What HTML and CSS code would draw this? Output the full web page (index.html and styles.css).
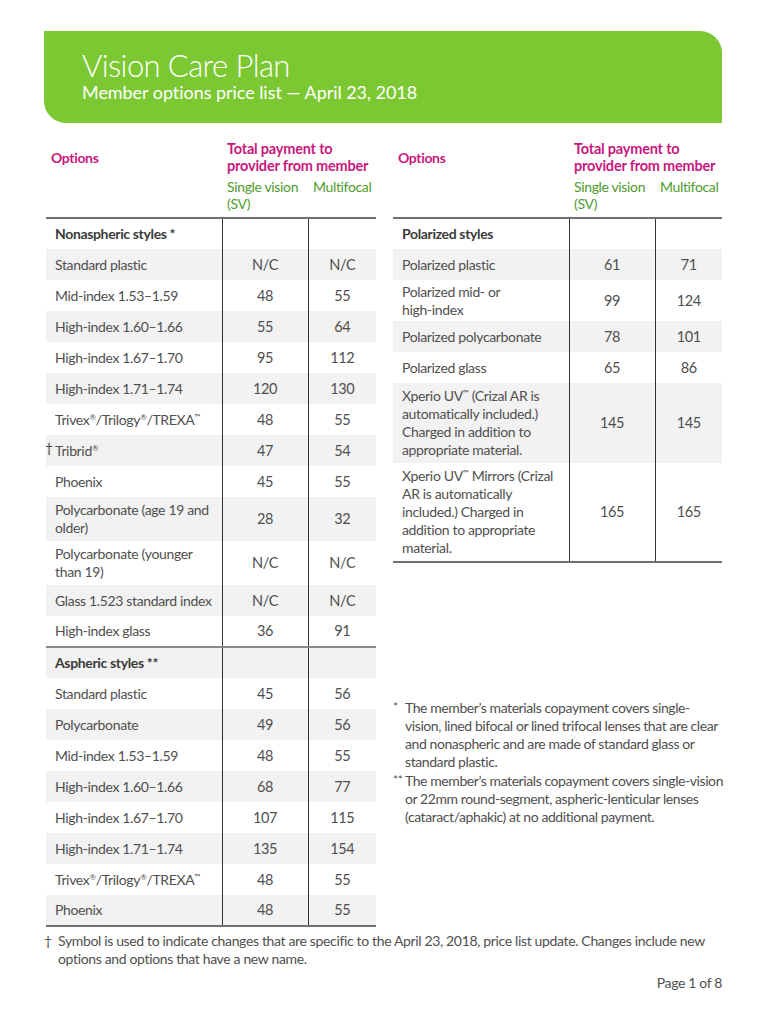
FILE: index.html
```html
<!DOCTYPE html>
<html lang="en">
<head>
<meta charset="utf-8">
<title>Vision Care Plan</title>
<link rel="stylesheet" href="styles.css">
</head>
<body>
<div class="page">
  <header class="banner">
    <h1 class="banner-title">Vision Care Plan</h1>
    <p class="banner-sub">Member options price list — April 23, 2018</p>
  </header>

  <div class="columns">
    <div class="col col-left">
      <table class="prices">
        <colgroup><col class="c-opt"><col class="c-sv"><col class="c-mf"></colgroup>
        <thead>
          <tr class="h1"><th class="h-opt">Options</th><th colspan="2" class="h-total">Total payment to<br>provider from member</th></tr>
          <tr class="h2"><th></th><th class="h-sub">Single vision<br>(SV)</th><th class="h-sub">Multifocal</th></tr>
        </thead>
        <tbody>
          <tr class="sec first"><td>Nonaspheric styles *</td><td></td><td></td></tr>
          <tr><td>Standard plastic</td><td>N/C</td><td>N/C</td></tr>
          <tr><td>Mid-index 1.53–1.59</td><td>48</td><td>55</td></tr>
          <tr><td>High-index 1.60–1.66</td><td>55</td><td>64</td></tr>
          <tr><td>High-index 1.67–1.70</td><td>95</td><td>112</td></tr>
          <tr><td>High-index 1.71–1.74</td><td>120</td><td>130</td></tr>
          <tr><td>Trivex<sup>®</sup>/Trilogy<sup>®</sup>/TREXA<sup>™</sup></td><td>48</td><td>55</td></tr>
          <tr><td class="flag"><span class="dagger">†</span>Tribrid<sup>®</sup></td><td>47</td><td>54</td></tr>
          <tr><td>Phoenix</td><td>45</td><td>55</td></tr>
          <tr><td>Polycarbonate (age 19 and<br>older)</td><td>28</td><td>32</td></tr>
          <tr><td>Polycarbonate (younger<br>than 19)</td><td>N/C</td><td>N/C</td></tr>
          <tr><td>Glass 1.523 standard index</td><td>N/C</td><td>N/C</td></tr>
          <tr><td>High-index glass</td><td>36</td><td>91</td></tr>
          <tr class="sec divider"><td>Aspheric styles **</td><td></td><td></td></tr>
          <tr><td>Standard plastic</td><td>45</td><td>56</td></tr>
          <tr><td>Polycarbonate</td><td>49</td><td>56</td></tr>
          <tr><td>Mid-index 1.53–1.59</td><td>48</td><td>55</td></tr>
          <tr><td>High-index 1.60–1.66</td><td>68</td><td>77</td></tr>
          <tr><td>High-index 1.67–1.70</td><td>107</td><td>115</td></tr>
          <tr><td>High-index 1.71–1.74</td><td>135</td><td>154</td></tr>
          <tr><td>Trivex<sup>®</sup>/Trilogy<sup>®</sup>/TREXA<sup>™</sup></td><td>48</td><td>55</td></tr>
          <tr class="last"><td>Phoenix</td><td>48</td><td>55</td></tr>
        </tbody>
      </table>
    </div>

    <div class="col col-right">
      <table class="prices">
        <colgroup><col class="c-opt"><col class="c-sv"><col class="c-mf"></colgroup>
        <thead>
          <tr class="h1"><th class="h-opt">Options</th><th colspan="2" class="h-total">Total payment to<br>provider from member</th></tr>
          <tr class="h2"><th></th><th class="h-sub">Single vision<br>(SV)</th><th class="h-sub">Multifocal</th></tr>
        </thead>
        <tbody>
          <tr class="sec first"><td>Polarized styles</td><td></td><td></td></tr>
          <tr><td>Polarized plastic</td><td>61</td><td>71</td></tr>
          <tr class="tight"><td>Polarized mid- or<br>high-index</td><td>99</td><td>124</td></tr>
          <tr><td>Polarized polycarbonate</td><td>78</td><td>101</td></tr>
          <tr><td>Polarized glass</td><td>65</td><td>86</td></tr>
          <tr><td>Xperio UV<sup>™</sup> (Crizal AR is<br>automatically included.)<br>Charged in addition to<br>appropriate material.</td><td>145</td><td>145</td></tr>
          <tr class="last"><td>Xperio UV<sup>™</sup> Mirrors (Crizal<br>AR is automatically<br>included.) Charged in<br>addition to appropriate<br>material.</td><td>165</td><td>165</td></tr>
        </tbody>
      </table>

      <div class="notes">
        <span class="mark">*</span>
        <p>The member’s materials copayment covers single-<br>vision, lined bifocal or lined trifocal lenses that are clear<br>and nonaspheric and are made of standard glass or<br>standard plastic.</p>
        <span class="mark">**</span>
        <p>The member’s materials copayment covers single-vision<br>or 22mm round-segment, aspheric-lenticular lenses<br>(cataract/aphakic) at no additional payment.</p>
      </div>
    </div>
  </div>

  <div class="dagger-note">
    <span class="mark">†</span>
    <p>Symbol is used to indicate changes that are specific to the April 23, 2018, price list update. Changes include new<br>options and options that have a new name.</p>
  </div>

  <p class="page-num">Page 1 of 8</p>
</div>
</body>
</html>
```

FILE: styles.css
```css
* { box-sizing: border-box; }

html, body {
  margin: 0;
  padding: 0;
  background: #ffffff;
}

body {
  font-family: Lato, "Open Sans", "Liberation Sans", sans-serif;
  font-size: 14px;
  color: #4f4f4f;
  letter-spacing: -0.35px;
}

.page {
  width: 768px;
  padding: 31px 46px 0 44px;
}

/* Banner */
.banner {
  background: #7bc832;
  color: #ffffff;
  height: 92px;
  padding: 18px 0 0 38px;
  border-radius: 0 22px 0 22px;
}

.banner-title {
  margin: 0;
  font-weight: 300;
  font-size: 31px;
  line-height: 33px;
  letter-spacing: -0.6px;
}

.banner-sub {
  margin: 0;
  font-weight: 400;
  font-size: 18px;
  line-height: 20px;
  letter-spacing: -0.05px;
}

/* Columns */
.columns {
  display: flex;
  gap: 17px;
  padding-left: 2px;
  margin-top: 17px;
}

.col-left { width: 330px; }
.col-right { width: 329px; }

/* Tables */
.prices {
  width: 100%;
  border-collapse: collapse;
  table-layout: fixed;
}

.c-opt { width: 176px; }
.c-sv { width: 86px; }
.c-mf { width: auto; }

.prices th {
  text-align: left;
  vertical-align: middle;
  padding: 0 0 0 5px;
  line-height: 17px;
  font-size: 14px;
  white-space: nowrap;
}

.h1 th {
  color: #c8187d;
  font-weight: 700;
}

.h1 th.h-total {
  font-size: 14.5px;
  letter-spacing: -0.2px;
}

.h2 th {
  color: #4f9a2c;
  font-weight: 400;
  vertical-align: top;
  padding-top: 4px;
  padding-bottom: 5px;
}

.prices tbody tr {
  height: 31px;
}

.prices tbody tr:nth-child(even) td {
  background: #f2f2f2;
}

.prices td {
  padding: 4px 0 4px 9px;
  line-height: 18px;
  vertical-align: middle;
  color: #4f4f4f;
  white-space: nowrap;
}

.prices tr.tight td {
  padding-top: 3px;
  padding-bottom: 2px;
}

.prices td + td {
  border-left: 1px solid #333333;
  text-align: center;
  padding-left: 2px;
  padding-right: 2px;
  font-size: 14.5px;
}

.prices tr.first td { border-top: 2px solid #707070; }
.prices tr.divider td { border-top: 2px solid #8a8a8a; }
.prices tr.last td { border-bottom: 2px solid #707070; }

.prices tr.sec td:first-child {
  font-weight: 700;
  color: #3a3a3a;
}

.prices sup {
  font-size: 8px;
  line-height: 0;
  vertical-align: 5px;
}

.flag { position: relative; }

.dagger {
  position: absolute;
  left: -1px;
  top: 4px;
  color: #444;
}

/* Footnotes */
.notes {
  display: grid;
  grid-template-columns: 12px 1fr;
  margin-top: 136px;
  line-height: 18px;
  color: #4f4f4f;
  white-space: nowrap;
  letter-spacing: -0.42px;
}

.notes p {
  margin: 0 0 1px;
}

.mark {
  font-size: 12px;
  line-height: 16px;
  color: #555;
}

.dagger-note {
  display: grid;
  grid-template-columns: 14px 1fr;
  margin-top: 5px;
  line-height: 18px;
  white-space: nowrap;
}

.dagger-note .mark {
  font-size: 14px;
  line-height: 18px;
}

.dagger-note p { margin: 0; }

.page-num {
  margin: 6px 0 0;
  text-align: right;
  line-height: 18px;
}
```
